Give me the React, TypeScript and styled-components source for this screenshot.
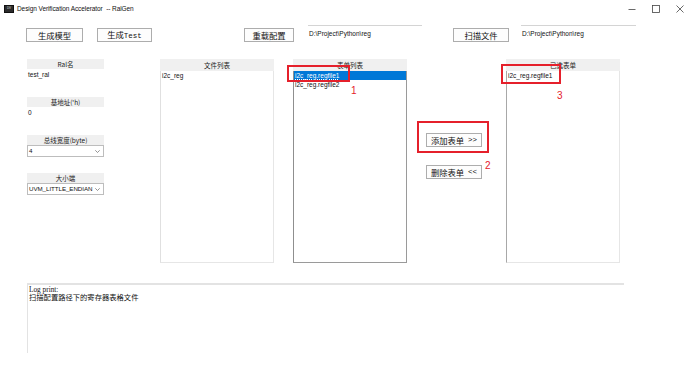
import React from "react";
import styled, { createGlobalStyle } from "styled-components";

const Global = createGlobalStyle`
  html, body { margin: 0; padding: 0; background: #fff; }
  #root { width: 692px; height: 389px; }
`;

const Window = styled.div`
  position: relative;
  width: 692px;
  height: 389px;
  background: #fff;
  overflow: hidden;
  color: #000;
  font-family: "Liberation Sans", "Noto Sans CJK SC", sans-serif;
`;

const TitleBar = styled.div`
  height: 17px;
  display: flex;
  align-items: center;
  padding-left: 4px;
`;

const AppIcon = styled.div`
  width: 10px;
  height: 8px;
  background: #2b2b2b;
  border: 1px solid #111;
  box-sizing: border-box;
  display: flex;
  align-items: flex-start;
  justify-content: center;
  color: #ddd;
  font-size: 3px;
  line-height: 4px;
`;

const TitleText = styled.span`
  margin-left: 3px;
  font-size: 6.5px;
  letter-spacing: -0.08px;
  color: #111;
`;

const Controls = styled.div`
  margin-left: auto;
  display: flex;
  height: 17px;
`;

const Control = styled.div`
  width: 24px;
  display: flex;
  align-items: center;
  justify-content: center;
`;

const Toolbar = styled.div`
  margin-top: 8px;
  height: 17px;
  display: flex;
  align-items: flex-start;
  padding-left: 26px;
`;

const Button = styled.button<{ $w: number; $ml?: number; $top?: number }>`
  width: ${(p) => p.$w}px;
  height: 14px;
  margin: ${(p) => p.$top ?? 3}px 0 0 ${(p) => p.$ml ?? 0}px;
  padding: 0;
  box-sizing: border-box;
  border: 1px solid #adadad;
  background: #fdfdfd;
  font-family: "Noto Sans CJK SC", sans-serif;
  font-size: 8.3px;
  line-height: 12px;
  color: #111;
  display: flex;
  align-items: center;
  justify-content: center;
  gap: 4px;
`;

const Mono = styled.span`
  font-family: "Liberation Mono", monospace;
  font-size: 7.5px;
`;

const PathInput = styled.div<{ $ml: number; $w: number }>`
  margin-left: ${(p) => p.$ml}px;
  width: ${(p) => p.$w}px;
  height: 14px;
  box-sizing: border-box;
  border-top: 1px solid #d4d4d4;
  padding: 3px 0 0 1px;
  font-size: 6.5px;
  line-height: 10px;
  color: #111;
  white-space: nowrap;
`;

const Main = styled.div`
  margin-top: 17px;
  display: flex;
  align-items: flex-start;
  padding-left: 27px;
  height: 204px;
`;

const LeftCol = styled.div`
  width: 77px;
  display: flex;
  flex-direction: column;
  gap: 16px;
`;

const Field = styled.div`
  display: flex;
  flex-direction: column;
`;

const FieldLabel = styled.div`
  height: 10px;
  background: #f0f0f0;
  text-align: center;
  font-family: "Noto Sans CJK SC", sans-serif;
  font-size: 6.5px;
  line-height: 10px;
  color: #222;
`;

const Entry = styled.div`
  height: 12px;
  padding-left: 1px;
  font-size: 6.5px;
  line-height: 12px;
  color: #111;
`;

const Combo = styled.div`
  height: 12px;
  box-sizing: border-box;
  border: 1px solid #bdbdbd;
  display: flex;
  align-items: center;
  justify-content: space-between;
  padding: 0 3px 0 1px;
  font-size: 6.2px;
  letter-spacing: -0.05px;
  line-height: 10px;
  color: #111;
  background: #fff;
  white-space: nowrap;
`;

const Panel = styled.div<{ $ml: number }>`
  margin-left: ${(p) => p.$ml}px;
  width: 114px;
  display: flex;
  flex-direction: column;
`;

const PanelHeader = styled.div`
  height: 12px;
  background: #f0f0f0;
  text-align: center;
  font-family: "Noto Sans CJK SC", sans-serif;
  font-size: 6.5px;
  line-height: 12px;
  color: #222;
`;

const ListBox = styled.div<{ $variant: "light" | "dark" | "left" }>`
  height: 192px;
  box-sizing: border-box;
  background: #fff;
  border: 1px solid ${(p) => (p.$variant === "dark" ? "#9a9a9a" : "#e6e6e6")};
  border-top: none;
  border-left-color: ${(p) =>
    p.$variant === "light" ? "#e0e0e0" : p.$variant === "dark" ? "#8f8f8f" : "#a8a8a8"};
`;

const ListItem = styled.div<{ $selected?: boolean }>`
  height: 9px;
  padding-left: 1px;
  font-size: 6.5px;
  line-height: 9px;
  white-space: nowrap;
  background: ${(p) => (p.$selected ? "#0078d7" : "transparent")};
  color: ${(p) => (p.$selected ? "#fff" : "#111")};
  text-decoration: ${(p) => (p.$selected ? "underline dotted" : "none")};
`;

const MidCol = styled.div`
  margin-left: 19px;
  width: 56px;
  padding-top: 74px;
  display: flex;
  flex-direction: column;
  gap: 18px;
`;

const LogArea = styled.div`
  margin: 20px 0 0 27px;
  width: 597px;
  height: 70px;
  box-sizing: border-box;
  border-top: 2px solid #e3e3e3;
  border-left: 1px solid #e3e3e3;
  padding: 1px 0 0 1px;
  font-family: "Liberation Serif", "Noto Sans CJK SC", serif;
  font-size: 7.3px;
  line-height: 7.5px;
  color: #111;
`;

const Mark = styled.div<{ $x: number; $y: number; $w: number; $h: number }>`
  position: absolute;
  left: ${(p) => p.$x}px;
  top: ${(p) => p.$y}px;
  width: ${(p) => p.$w}px;
  height: ${(p) => p.$h}px;
  box-sizing: border-box;
  border: 2px solid #e5202b;
  pointer-events: none;
`;

const MarkNum = styled.div<{ $x: number; $y: number }>`
  position: absolute;
  left: ${(p) => p.$x}px;
  top: ${(p) => p.$y}px;
  color: #e5202b;
  font-family: "Liberation Sans", sans-serif;
  font-size: 10px;
  line-height: 10px;
`;

const Chevron = () => (
  <svg width="5" height="3" viewBox="0 0 5 3">
    <polyline points="0.3,0.3 2.5,2.5 4.7,0.3" fill="none" stroke="#666" strokeWidth="0.7" />
  </svg>
);

export default function App() {
  return (
    <Window>
      <Global />
      <TitleBar>
        <AppIcon>DV</AppIcon>
        <TitleText>Design Verification Accelerator&nbsp;&nbsp;-- RalGen</TitleText>
        <Controls>
          <Control>
            <svg width="8" height="8" viewBox="0 0 8 8">
              <line x1="0.5" y1="4.5" x2="7.5" y2="4.5" stroke="#444" strokeWidth="0.8" />
            </svg>
          </Control>
          <Control>
            <svg width="8" height="8" viewBox="0 0 8 8">
              <rect x="0.5" y="0.5" width="7" height="7" fill="none" stroke="#444" strokeWidth="0.8" />
            </svg>
          </Control>
          <Control>
            <svg width="8" height="8" viewBox="0 0 8 8">
              <line x1="0.5" y1="0.5" x2="7.5" y2="7.5" stroke="#444" strokeWidth="0.8" />
              <line x1="7.5" y1="0.5" x2="0.5" y2="7.5" stroke="#444" strokeWidth="0.8" />
            </svg>
          </Control>
        </Controls>
      </TitleBar>

      <Toolbar>
        <Button $w={57}>生成模型</Button>
        <Button $w={55} $ml={14}>
          <span>
            生成<Mono>Test</Mono>
          </span>
        </Button>
        <Button $w={50} $ml={92}>重载配置</Button>
        <PathInput $ml={14} $w={114}>D:\Project\Python\reg</PathInput>
        <Button $w={56} $ml={31}>扫描文件</Button>
        <PathInput $ml={12} $w={115}>D:\Project\Python\reg</PathInput>
      </Toolbar>

      <Main>
        <LeftCol>
          <Field>
            <FieldLabel>Ral名</FieldLabel>
            <Entry>test_ral</Entry>
          </Field>
          <Field>
            <FieldLabel>基地址('h)</FieldLabel>
            <Entry>0</Entry>
          </Field>
          <Field>
            <FieldLabel>总线宽度(byte)</FieldLabel>
            <Combo>
              <span>4</span>
              <Chevron />
            </Combo>
          </Field>
          <Field>
            <FieldLabel>大小端</FieldLabel>
            <Combo>
              <span>UVM_LITTLE_ENDIAN</span>
              <Chevron />
            </Combo>
          </Field>
        </LeftCol>

        <Panel $ml={56}>
          <PanelHeader>文件列表</PanelHeader>
          <ListBox $variant="light">
            <ListItem>i2c_reg</ListItem>
          </ListBox>
        </Panel>

        <Panel $ml={19}>
          <PanelHeader>表单列表</PanelHeader>
          <ListBox $variant="dark">
            <ListItem $selected>i2c_reg.regfile1</ListItem>
            <ListItem>i2c_reg.regfile2</ListItem>
          </ListBox>
        </Panel>

        <MidCol>
          <Button $w={56} $top={0}>
            添加表单 <Mono>&gt;&gt;</Mono>
          </Button>
          <Button $w={56} $top={0}>
            删除表单 <Mono>&lt;&lt;</Mono>
          </Button>
        </MidCol>

        <Panel $ml={24}>
          <PanelHeader>已选表单</PanelHeader>
          <ListBox $variant="left">
            <ListItem>i2c_reg.regfile1</ListItem>
          </ListBox>
        </Panel>
      </Main>

      <LogArea>
        <div>Log print:</div>
        <div>扫描配置路径下的寄存器表格文件</div>
      </LogArea>

      <Mark $x={287} $y={65} $w={63} $h={17} />
      <MarkNum $x={351} $y={86}>1</MarkNum>
      <Mark $x={417} $y={121} $w={72} $h={32} />
      <MarkNum $x={485} $y={161}>2</MarkNum>
      <Mark $x={501} $y={64} $w={60} $h={20} />
      <MarkNum $x={557} $y={91}>3</MarkNum>
    </Window>
  );
}
